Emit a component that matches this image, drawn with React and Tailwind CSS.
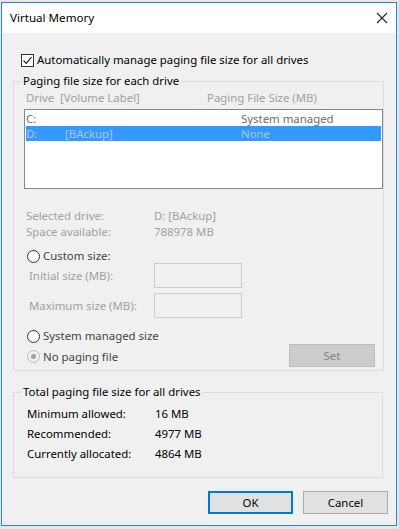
import React from 'react';

const font = { fontFamily: '"Noto Sans", "Open Sans", sans-serif' };

const Radio = ({ checked = false, disabled = false }) => (
  <span
    className={`w-[13px] h-[13px] rounded-full border flex items-center justify-center shrink-0 ${
      disabled ? 'border-[#bcbcbc] bg-[#f0f0f0]' : 'border-[#333333] bg-white'
    }`}
  >
    {checked && <span className="w-[5px] h-[5px] rounded-full bg-[#a0a0a0]"></span>}
  </span>
);

const Row = ({ label, value, labelClass = '' }) => (
  <div className="h-[16px] flex items-center">
    <span className={`w-[128px] ${labelClass}`}>{label}</span>
    <span>{value}</span>
  </div>
);

export default function App() {
  return (
    <div className="w-[399px] h-[529px] bg-[#e6e6e6] pt-[2px] pl-[1px] text-[11.4px] text-black overflow-hidden" style={font}>
      <div className="w-[396px] h-[524px] border border-[#2b85d4] bg-[#f0f0f0] flex flex-col">
        {/* Title bar */}
        <div className="h-[30px] bg-white flex items-center justify-between pl-[8px] pr-[8px] shrink-0">
          <span className="text-[11.6px] leading-[16px]">Virtual Memory</span>
          <svg width="12" height="12" viewBox="0 0 12 12">
            <path d="M1 1 L11 11 M11 1 L1 11" stroke="#222" strokeWidth="1.1" fill="none" />
          </svg>
        </div>

        {/* Auto manage checkbox */}
        <div className="mt-[19px] h-[16px] flex items-center pl-[19px]">
          <span className="w-[13px] h-[13px] border border-[#333333] bg-white flex items-center justify-center mr-[3px]">
            <svg width="11" height="11" viewBox="0 0 11 11">
              <path d="M1.5 5.5 L4.3 8.3 L9.5 2.2" stroke="#222" strokeWidth="1.2" fill="none" />
            </svg>
          </span>
          <span>Automatically manage paging file size for all drives</span>
        </div>

        {/* Paging file size for each drive */}
        <fieldset className="mt-[5px] ml-[11px] w-[371px] border border-[#dcdcdc] pb-[3px]">
          <legend className="ml-[7px] px-[2px] leading-[16px]">Paging file size for each drive</legend>
          <div className="mt-[1px] h-[16px] flex items-center pl-[12px] text-[#a0a0a0]">
            <span className="w-[181px]">Drive&nbsp; [Volume Label]</span>
            <span>Paging File Size (MB)</span>
          </div>
          <div className="mt-[3px] ml-[10px] w-[359px] h-[80px] border border-[#828790] bg-white pt-[1px] px-[1px]">
            <div className="h-[15px] flex items-center text-[#6d6d6d] leading-[14px]">
              <span className="w-[215px]">C:</span>
              <span>System managed</span>
            </div>
            <div className="h-[15px] flex items-center bg-[#3399ff] text-[#a6c8ee] leading-[14px]">
              <span className="w-[39px]">D:</span>
              <span className="w-[176px]">[BAckup]</span>
              <span>None</span>
            </div>
          </div>

          <div className="mt-[19px] pl-[12px] text-[#a0a0a0]">
            <Row label="Selected drive:" value="D:  [BAckup]" />
            <Row label="Space available:" value="788978 MB" />
          </div>

          <div className="mt-[9px] h-[14px] flex items-center pl-[13px] text-[#444444]">
            <Radio />
            <span className="ml-[3px]">Custom size:</span>
          </div>
          <div className="h-[25px] flex items-center pl-[15px] text-[#a0a0a0]">
            <span className="w-[125px]">Initial size (MB):</span>
            <span className="w-[88px] h-[25px] border border-[#cccccc] bg-[#f0f0f0]"></span>
          </div>
          <div className="mt-[5px] h-[25px] flex items-center pl-[15px] text-[#a0a0a0]">
            <span className="w-[125px]">Maximum size (MB):</span>
            <span className="w-[88px] h-[25px] border border-[#cccccc] bg-[#f0f0f0]"></span>
          </div>

          <div className="mt-[10px] h-[16px] flex items-center pl-[13px] text-[#444444]">
            <Radio />
            <span className="ml-[3px]">System managed size</span>
          </div>
          <div className="h-[23px] flex items-center pl-[13px] text-[#444444]">
            <div className="flex items-center mt-[3px]">
              <Radio checked disabled />
              <span className="ml-[3px]">No paging file</span>
            </div>
            <span className="ml-auto mr-[8px] w-[86px] h-[23px] border border-[#bfbfbf] bg-[#cccccc] text-[#838383] flex items-center justify-center">
              Set
            </span>
          </div>
        </fieldset>

        {/* Total paging file size */}
        <fieldset className="mt-[13px] ml-[11px] w-[370px] border border-[#dcdcdc] pb-[15px]">
          <legend className="ml-[7px] px-[2px] leading-[16px]">Total paging file size for all drives</legend>
          <div className="mt-[6px] pl-[13px] flex flex-col gap-[4px]">
            <Row label="Minimum allowed:" value="16 MB" />
            <Row label="Recommended:" value="4977 MB" />
            <Row label="Currently allocated:" value="4864 MB" />
          </div>
        </fieldset>

        {/* Buttons */}
        <div className="mt-[13px] flex justify-end gap-[10px] pr-[8px]">
          <button className="w-[85px] h-[23px] border-2 border-[#0078d7] bg-[#e1e1e1] flex items-center justify-center">
            OK
          </button>
          <button className="w-[85px] h-[23px] border border-[#adadad] bg-[#e1e1e1] flex items-center justify-center">
            Cancel
          </button>
        </div>
      </div>
    </div>
  );
}
